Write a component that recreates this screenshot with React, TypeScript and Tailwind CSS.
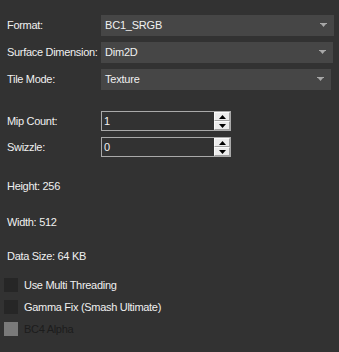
import React from "react";

const font = { fontFamily: '"Liberation Sans", Arial, sans-serif' };

function Arrow() {
  return (
    <svg width="8" height="5" viewBox="0 0 8 5" className="block">
      <rect x="0" y="0" width="7" height="1" fill="#a8a8a8" />
      <polygon points="1,1 6,1 3.5,4" fill="#a8a8a8" />
    </svg>
  );
}

function Dropdown({ label, value, width }: { label: string; value: string; width: string }) {
  return (
    <div className="flex items-center h-[21px]">
      <div className="w-[101px] pl-[7px] text-[11px] tracking-[-0.3px] whitespace-nowrap text-[#f0f0f0] leading-none">{label}</div>
      <div className={`${width} h-[21px] bg-[#464646] flex items-center justify-between pl-[4px] pr-[6px]`}>
        <span className="text-[11px] tracking-[-0.2px] text-[#f0f0f0] leading-none">{value}</span>
        <Arrow />
      </div>
    </div>
  );
}

function Spin() {
  return (
    <div className="w-[16px] h-[18px] flex flex-col bg-[#d8d8d8]">
      <div className="h-[9px] flex items-center justify-center bg-[#ececec] border border-t-[#fafafa] border-l-[#fafafa] border-r-[#a0a0a0] border-b-[#a0a0a0]">
        <svg width="7" height="4" viewBox="0 0 7 4"><polygon points="0,4 7,4 3.5,0" fill="#000" /></svg>
      </div>
      <div className="h-[9px] flex items-center justify-center bg-[#ececec] border border-t-[#fafafa] border-l-[#fafafa] border-r-[#a0a0a0] border-b-[#a0a0a0]">
        <svg width="7" height="4" viewBox="0 0 7 4"><polygon points="0,0 7,0 3.5,4" fill="#000" /></svg>
      </div>
    </div>
  );
}

function NumberRow({ label, value }: { label: string; value: string }) {
  return (
    <div className="flex items-center h-[20px]">
      <div className="w-[101px] pl-[7px] text-[11px] tracking-[-0.3px] whitespace-nowrap text-[#f0f0f0] leading-none">{label}</div>
      <div className="w-[130px] h-[20px] border border-[#a9a9a9] flex items-center justify-between">
        <span className="pl-[2px] text-[11px] text-[#f0f0f0] leading-none">{value}</span>
        <Spin />
      </div>
    </div>
  );
}

function Check({ label, disabled }: { label: string; disabled?: boolean }) {
  return (
    <div className="flex items-center h-[14px]">
      <div className={`ml-[4px] w-[14px] h-[14px] ${disabled ? "bg-[#7a7a7a]" : "bg-[#262626]"}`} />
      <span className={`ml-[6px] text-[11px] tracking-[-0.3px] whitespace-nowrap leading-none ${disabled ? "text-[#1c1c1c]" : "text-[#f0f0f0]"}`}>{label}</span>
    </div>
  );
}

export default function App() {
  return (
    <div className="w-[339px] h-[352px] bg-[#323232] flex flex-col" style={font}>
      <div className="h-[15px]" />
      <div className="flex flex-col gap-[6px]">
        <Dropdown label="Format:" value="BC1_SRGB" width="w-[233px]" />
        <Dropdown label="Surface Dimension:" value="Dim2D" width="w-[232px]" />
        <Dropdown label="Tile Mode:" value="Texture" width="w-[230px]" />
      </div>
      <div className="h-[21px]" />
      <div className="flex flex-col gap-[6px]">
        <NumberRow label="Mip Count:" value="1" />
        <NumberRow label="Swizzle:" value="0" />
      </div>
      <div className="flex flex-col pl-[7px] text-[11px] tracking-[-0.3px] text-[#f0f0f0] leading-[13px]">
        <div className="mt-[23px]">Height: 256</div>
        <div className="mt-[23px]">Width: 512</div>
        <div className="mt-[21px]">Data Size: 64 KB</div>
      </div>
      <div className="flex flex-col gap-[8px] mt-[15px]">
        <Check label="Use Multi Threading" />
        <Check label="Gamma Fix (Smash Ultimate)" />
        <Check label="BC4 Alpha" disabled />
      </div>
    </div>
  );
}
